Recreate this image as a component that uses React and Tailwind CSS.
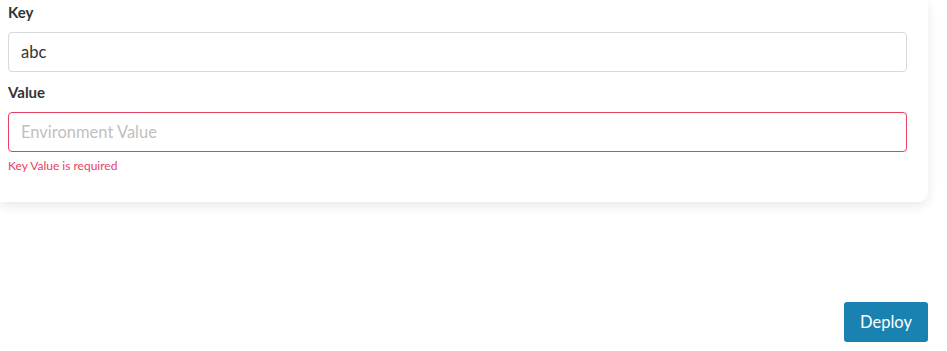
export default function App() {
  return (
    <div className="w-[947px] h-[351px] bg-white overflow-hidden" style={{ fontFamily: "Lato, sans-serif" }}>
      <div className="w-[928px]">
        <div className="bg-white rounded-br-[10px] shadow-[0_4px_12px_rgba(0,0,0,0.09)] pl-2 pr-[21px] pt-[1px] pb-[29px]">
          <label className="block text-[15px] font-bold text-[#333] leading-[22px]">Key</label>
          <input
            className="mt-[9px] block w-full h-10 px-3 rounded-[4px] border border-[#d9d9d9] text-[16.5px] text-[#333] outline-none"
            defaultValue="abc"
          />
          <label className="block mt-[9px] text-[15px] font-bold text-[#333] leading-[22px]">Value</label>
          <input
            className="mt-[9px] block w-full h-10 px-3 rounded-[4px] border border-[#e8405f] text-[16.5px] text-[#333] placeholder:text-[#bfbfbf] outline-none"
            placeholder="Environment Value"
          />
          <div className="mt-[6px] text-[12px] text-[#e8405f] leading-[15px]">Key Value is required</div>
        </div>
        <div className="flex justify-end mt-[100px]">
          <button className="w-[84px] h-10 rounded-[3px] bg-[#1a82b1] text-white text-[16.5px]">Deploy</button>
        </div>
      </div>
    </div>
  );
}
